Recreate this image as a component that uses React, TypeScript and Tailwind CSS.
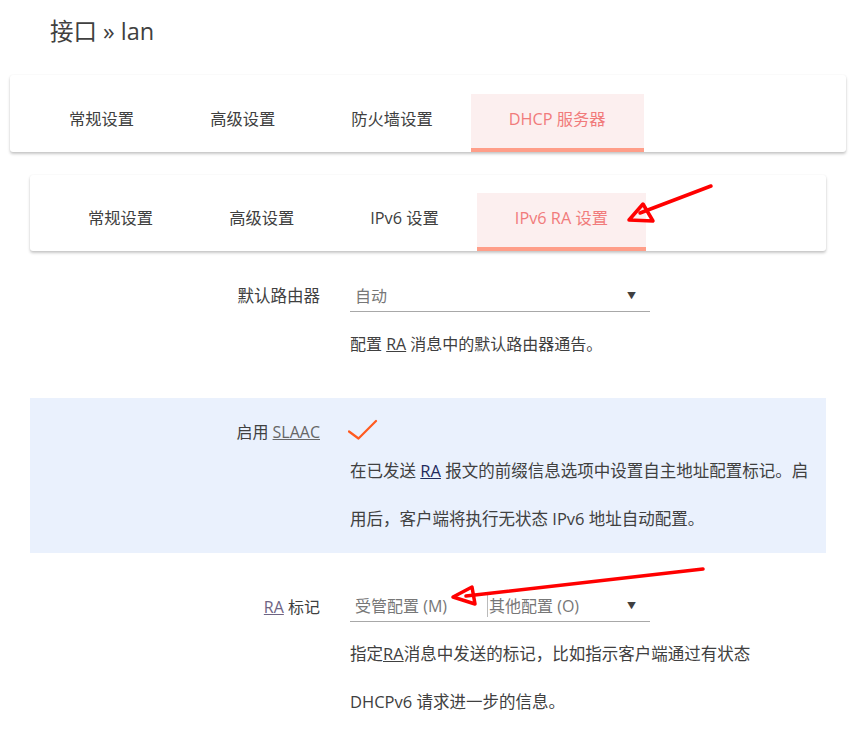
import React from "react";

const FONT = '"Open Sans", "Noto Sans CJK SC", sans-serif';

function Tabs({ items, active, first }: { items: string[]; active: number; first?: boolean }) {
  return (
    <div className={`flex ${first ? "pt-[19px] pl-[21px]" : "pt-[18px] pl-[20px]"}`}>
      {items.map((t, i) => (
        <div
          key={t}
          className={
            i === active
              ? "h-[58px] px-[38px] flex items-center pb-[4px] bg-[#fcefef] text-[#f17b7b] border-b-[4px] border-[#ff9e89] text-[16.3px] whitespace-nowrap"
              : "h-[58px] px-[38px] flex items-center pb-[4px] text-[#404040] text-[16.3px] whitespace-nowrap border-b-[4px] border-transparent"
          }
        >
          {t}
        </div>
      ))}
    </div>
  );
}

export default function App() {
  return (
    <div className="relative w-[849px] min-h-[747px] bg-white overflow-hidden" style={{ fontFamily: FONT }}>
      <div className="pt-[15px] pl-[50px] text-[23.5px] leading-[32px] text-[#404040]">接口 » lan</div>

      <div className="ml-[10px] mr-[3px] mt-[28px] rounded-[3px] bg-white shadow-[0_2px_3px_rgba(0,0,0,0.22),0_0_2px_rgba(0,0,0,0.06)]">
        <Tabs items={["常规设置", "高级设置", "防火墙设置", "DHCP 服务器"]} active={3} first />
      </div>

      <div className="ml-[30px] mr-[23px] mt-[23px] rounded-[3px] bg-white shadow-[0_2px_3px_rgba(0,0,0,0.22),0_0_2px_rgba(0,0,0,0.06)]">
        <Tabs items={["常规设置", "高级设置", "IPv6 设置", "IPv6 RA 设置"]} active={3} />
      </div>

      {/* Row 1 */}
      <div className="ml-[30px] mr-[23px] mt-[30px] flex">
        <div className="w-[290px] h-[31px] flex items-center justify-end text-[16.5px] text-[#404040]">默认路由器</div>
        <div className="ml-[30px] w-[466px]">
          <div className="w-[300px] h-[31px] border-b border-[#a8a8a8] flex items-center justify-between pl-[5px] pr-[14px] text-[16px] text-[#777]">
            <span>自动</span>
            <span className="text-[9px] text-[#404040]">▼</span>
          </div>
          <div className="mt-[8px] text-[16px] leading-[48px] text-[#404040]">
            配置 <span className="underline text-[#404040]">RA</span> 消息中的默认路由器通告。
          </div>
        </div>
      </div>

      {/* Row 2 */}
      <div className="ml-[30px] mr-[23px] mt-[30px] bg-[#eaf1fd] pt-[19px] pb-[10px] flex">
        <div className="w-[290px] h-[30px] flex items-center justify-end text-[16px] text-[#404040]">
          启用&nbsp;<span className="underline text-[#666]">SLAAC</span>
        </div>
        <div className="ml-[30px] w-[466px]">
          <div className="h-[30px] flex items-center">
            <svg width="30" height="24" viewBox="0 0 30 24" className="-ml-[2px] -mt-[5px]">
              <path d="M1 13.5 L10.5 20.5 L28 3" stroke="#ff5a1f" strokeWidth="2.2" fill="none" strokeLinecap="round" strokeLinejoin="round" />
            </svg>
          </div>
          <div className="text-[16.5px] leading-[48px] text-[#404040]">
            在已发送 <span className="underline text-[#1f2a5c]">RA</span> 报文的前缀信息选项中设置自主地址配置标记。启用后，客户端将执行无状态 IPv6 地址自动配置。
          </div>
        </div>
      </div>

      {/* Row 3 */}
      <div className="ml-[30px] mr-[23px] mt-[38px] flex">
        <div className="w-[290px] h-[31px] flex items-center justify-end text-[16px] text-[#404040]">
          <span className="underline text-[#6e6483]">RA</span>&nbsp;标记
        </div>
        <div className="ml-[30px] w-[466px]">
          <div className="w-[300px] h-[31px] border-b border-[#a8a8a8] flex items-center pl-[5px] pr-[14px] text-[16px] text-[#777]">
            <span className="w-[132px]">受管配置 (M)</span>
            <span className="border-l border-[#bbb] pl-[1px] leading-[22px]">其他配置 (O)</span>
            <span className="ml-auto text-[9px] text-[#404040]">▼</span>
          </div>
          <div className="mt-[8px] text-[16.5px] leading-[48px] text-[#404040]">
            指定<span className="underline text-[#404040]">RA</span>消息中发送的标记，比如指示客户端通过有状态
            <br />
            DHCPv6 请求进一步的信息。
          </div>
        </div>
      </div>

      {/* Annotation arrows */}
      <svg className="absolute left-0 top-0 pointer-events-none" width="849" height="747">
        <line x1="711" y1="186" x2="640" y2="213" stroke="#ff0000" strokeWidth="3.5" strokeLinecap="round" />
        <polygon points="629,220 643,204 653,221" fill="none" stroke="#ff0000" strokeWidth="3.5" strokeLinejoin="round" />
        <line x1="703" y1="569" x2="466" y2="596" stroke="#ff0000" strokeWidth="3.5" strokeLinecap="round" />
        <polygon points="453,597 472,587 475,604" fill="none" stroke="#ff0000" strokeWidth="3.5" strokeLinejoin="round" />
      </svg>
    </div>
  );
}
